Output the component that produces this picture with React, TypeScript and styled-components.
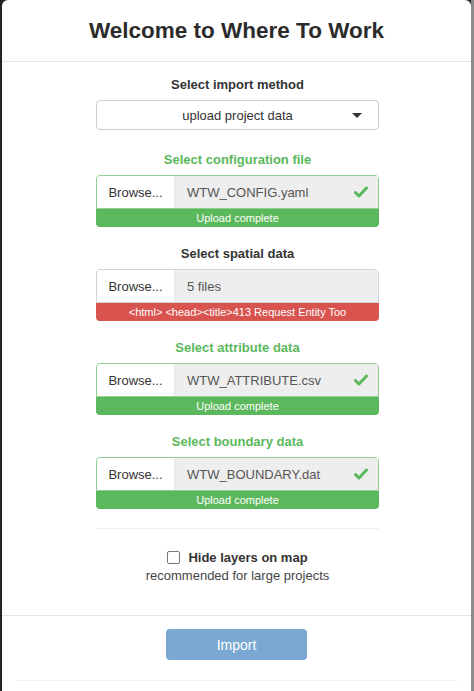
import React from "react";
import styled, { createGlobalStyle } from "styled-components";

const Global = createGlobalStyle`
  html, body { margin: 0; padding: 0; }
  body {
    background: #1f2427;
    font-family: "Liberation Sans", Arial, sans-serif;
    color: #333;
    width: 474px;
    height: 691px;
    overflow: hidden;
  }
`;

const Frame = styled.div`
  display: flex;
  height: 691px;
  padding-left: 2px;
`;

const Modal = styled.div`
  width: 469px;
  background: #fff;
  border-radius: 6px 6px 0 0;
  display: flex;
  flex-direction: column;
`;

const RightStrip = styled.div`
  width: 3px;
  background: #8c8c8c;
`;

const Header = styled.div`
  height: 61px;
  border-bottom: 1px solid #e5e5e5;
  display: flex;
  align-items: center;
  justify-content: center;
`;

const Title = styled.h1`
  margin: 0;
  font-size: 22.5px;
  font-weight: 700;
  color: #2b2b2b;
`;

const Body = styled.div`
  padding: 13px 0 0 2px;
  display: flex;
  flex-direction: column;
  align-items: center;
  height: 554px;
  box-sizing: border-box;
  border-bottom: 1px solid #e5e5e5;
`;

const Column = styled.div`
  width: 283px;
  display: flex;
  flex-direction: column;
`;

const Group = styled.div`
  display: flex;
  flex-direction: column;
  margin-bottom: 17px;
`;

const Label = styled.div<{ $ok?: boolean }>`
  font-size: 13px;
  font-weight: 700;
  text-align: center;
  line-height: 20px;
  margin-bottom: 5px;
  color: ${(p) => (p.$ok ? "#5cb85c" : "#333")};
`;

const Select = styled.div`
  height: 30px;
  border: 1px solid #ccc;
  border-radius: 4px;
  box-sizing: border-box;
  display: flex;
  align-items: center;
  justify-content: center;
  font-size: 13px;
  color: #333;
  position: relative;
  margin-bottom: 3px;
`;

const Caret = styled.span`
  position: absolute;
  right: 16px;
  top: 12px;
  width: 0;
  height: 0;
  border-left: 5px solid transparent;
  border-right: 5px solid transparent;
  border-top: 5px solid #333;
`;

const InputGroup = styled.div<{ $ok?: boolean }>`
  display: flex;
  height: 34px;
  box-sizing: border-box;
  border: 1px solid ${(p) => (p.$ok ? "#8fcf8f" : "#d4d4d4")};
  border-radius: 4px 4px 0 0;
  position: relative;
  font-size: 13px;
`;

const Browse = styled.div`
  width: 77px;
  background: #fff;
  display: flex;
  align-items: center;
  justify-content: center;
  color: #333;
  border-right: 1px solid #e8e8e8;
  border-radius: 4px 0 0 0;
`;

const FileName = styled.div`
  flex: 1;
  background: #eee;
  display: flex;
  align-items: center;
  padding-left: 12px;
  color: #555;
`;

const Check = styled.svg`
  position: absolute;
  right: 10px;
  top: 10px;
`;

const Bar = styled.div<{ $error?: boolean }>`
  height: 18px;
  background: ${(p) => (p.$error ? "#d9534f" : "#5cb85c")};
  color: #fff;
  font-size: 11px;
  display: flex;
  align-items: center;
  justify-content: center;
  border-radius: 0 0 4px 4px;
`;

const Divider = styled.hr`
  width: 283px;
  border: 0;
  border-top: 1px solid #eee;
  margin: 2px 0 0;
`;

const CheckRow = styled.label`
  display: flex;
  align-items: center;
  gap: 8px;
  margin-top: 21px;
  font-size: 13px;
  font-weight: 700;
  color: #333;
`;

const Box = styled.span`
  width: 11px;
  height: 11px;
  border: 1px solid #767676;
  border-radius: 2px;
  display: inline-block;
  background: #fff;
`;

const Hint = styled.div`
  font-size: 13px;
  color: #444;
  margin-top: 3px;
`;

const Footer = styled.div`
  display: flex;
  flex-direction: column;
  align-items: center;
  padding-top: 13px;
`;

const ImportButton = styled.button`
  width: 141px;
  height: 31px;
  border: 0;
  border-radius: 4px;
  background: #7aa8d2;
  color: #fff;
  font-family: "Liberation Sans", Arial, sans-serif;
  font-size: 14px;
  cursor: not-allowed;
`;

const FaintLine = styled.div`
  width: 440px;
  height: 1px;
  background: #f0f0f0;
  margin-top: 20px;
`;

const CheckIcon = () => (
  <Check width="14" height="12" viewBox="0 0 14 12">
    <path d="M1.5 6.5 L5 10 L12.5 2" fill="none" stroke="#5cb85c" strokeWidth="3" strokeLinecap="round" strokeLinejoin="round" />
  </Check>
);

type Upload = { label: string; file: string; ok: boolean; msg: string };

const uploads: Upload[] = [
  { label: "Select configuration file", file: "WTW_CONFIG.yaml", ok: true, msg: "Upload complete" },
  { label: "Select spatial data", file: "5 files", ok: false, msg: "<html> <head><title>413 Request Entity Too" },
  { label: "Select attribute data", file: "WTW_ATTRIBUTE.csv", ok: true, msg: "Upload complete" },
  { label: "Select boundary data", file: "WTW_BOUNDARY.dat", ok: true, msg: "Upload complete" },
];

export default function App() {
  return (
    <>
      <Global />
      <Frame>
        <Modal>
          <Header>
            <Title>Welcome to Where To Work</Title>
          </Header>
          <Body>
            <Column>
              <Group>
                <Label>Select import method</Label>
                <Select>
                  upload project data
                  <Caret />
                </Select>
              </Group>
              {uploads.map((u) => (
                <Group key={u.label}>
                  <Label $ok={u.ok}>{u.label}</Label>
                  <InputGroup $ok={u.ok}>
                    <Browse>Browse...</Browse>
                    <FileName>{u.file}</FileName>
                    {u.ok && <CheckIcon />}
                  </InputGroup>
                  <Bar $error={!u.ok}>{u.msg}</Bar>
                </Group>
              ))}
            </Column>
            <Divider />
            <CheckRow>
              <Box />
              Hide layers on map
            </CheckRow>
            <Hint>recommended for large projects</Hint>
          </Body>
          <Footer>
            <ImportButton>Import</ImportButton>
            <FaintLine />
          </Footer>
        </Modal>
        <RightStrip />
      </Frame>
    </>
  );
}
